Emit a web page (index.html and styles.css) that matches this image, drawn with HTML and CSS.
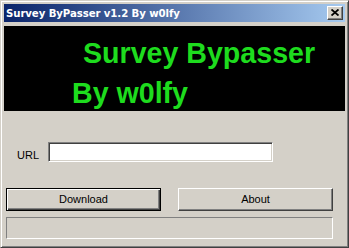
FILE: index.html
```html
<!DOCTYPE html>
<html>
<head>
<meta charset="utf-8">
<link rel="stylesheet" href="styles.css">
</head>
<body>
<div class="window">
  <div class="titlebar">
    <span class="title">Survey ByPasser v1.2 By w0lfy</span>
    <div class="close">
      <svg width="8" height="7" viewBox="0 0 8 7"><path d="M0.5 0.5 L7.5 6.5 M7.5 0.5 L0.5 6.5" stroke="#000" stroke-width="1.8" fill="none"/></svg>
    </div>
  </div>
  <div class="banner">
    <div class="line1">Survey Bypasser</div>
    <div class="line2">By w0lfy</div>
  </div>
  <div class="content">
    <div class="url-row">
      <span class="label">URL</span>
      <div class="input"></div>
    </div>
    <div class="buttons">
      <div class="btn btn-default">Download</div>
      <div class="btn">About</div>
    </div>
    <div class="progress"></div>
  </div>
</div>
</body>
</html>
```
FILE: styles.css
```css
html, body {
  margin: 0;
  padding: 0;
  background: #d4d0c8;
}
.window {
  width: 349px;
  height: 248px;
  box-sizing: border-box;
  background: #d4d0c8;
  border: 1px solid;
  border-color: #d4d0c8 #404040 #404040 #d4d0c8;
  box-shadow: inset 1px 1px #ffffff, inset -1px -1px #808080;
  padding: 3px;
  font-family: "Liberation Sans", Arial, sans-serif;
  font-size: 11px;
  color: #000;
}
.titlebar {
  height: 18px;
  background: linear-gradient(to right, #0a246a, #a6caf0);
  display: flex;
  align-items: center;
  justify-content: space-between;
  padding: 0 2px 0 2px;
}
.title {
  color: #fff;
  font-family: "DejaVu Sans", Verdana, sans-serif;
  font-weight: bold;
  font-size: 10.2px;
  letter-spacing: -0.1px;
  white-space: nowrap;
}
.close {
  width: 16px;
  height: 14px;
  box-sizing: border-box;
  background: #d4d0c8;
  border: 1px solid;
  border-color: #ffffff #404040 #404040 #ffffff;
  box-shadow: inset -1px -1px #808080;
  display: flex;
  align-items: center;
  justify-content: center;
  padding: 0 1px 1px 0;
}
.close svg {
  display: block;
}
.banner {
  margin-top: 4px;
  height: 85px;
  background: #000;
  overflow: hidden;
  padding-top: 7px;
  box-sizing: border-box;
  color: #1edc1e;
  font-family: "Liberation Sans", Arial, sans-serif;
  font-weight: bold;
  font-size: 28.6px;
  line-height: 40px;
  white-space: nowrap;
}
.line1 {
  padding-left: 79px;
}
.line2 {
  padding-left: 68px;
}
.content {
  padding: 0 12px 0 2px;
}
.url-row {
  margin-top: 31px;
  display: flex;
  align-items: center;
}
.label {
  margin-left: 11px;
  width: 31px;
  padding-top: 6px;
}
.input {
  width: 225px;
  height: 20px;
  box-sizing: border-box;
  background: #fff;
  border: 1px solid;
  border-color: #808080 #ffffff #ffffff #808080;
  box-shadow: inset 1px 1px #404040, inset -1px -1px #d4d0c8;
}
.buttons {
  margin-top: 26px;
  display: flex;
  gap: 17px;
}
.btn {
  width: 155px;
  height: 23px;
  box-sizing: border-box;
  border: 1px solid;
  border-color: #ffffff #404040 #404040 #ffffff;
  box-shadow: inset -1px -1px #808080;
  display: flex;
  align-items: center;
  justify-content: center;
  font-size: 11px;
  padding-bottom: 1px;
}
.btn-default {
  border: 1px solid #000;
  box-shadow: inset 1px 1px #ffffff, inset -1px -1px #404040, inset -2px -2px #808080;
}
.progress {
  margin-top: 6px;
  width: 327px;
  height: 22px;
  box-sizing: border-box;
  border: 1px solid;
  border-color: #808080 #ffffff #ffffff #808080;
}
```
